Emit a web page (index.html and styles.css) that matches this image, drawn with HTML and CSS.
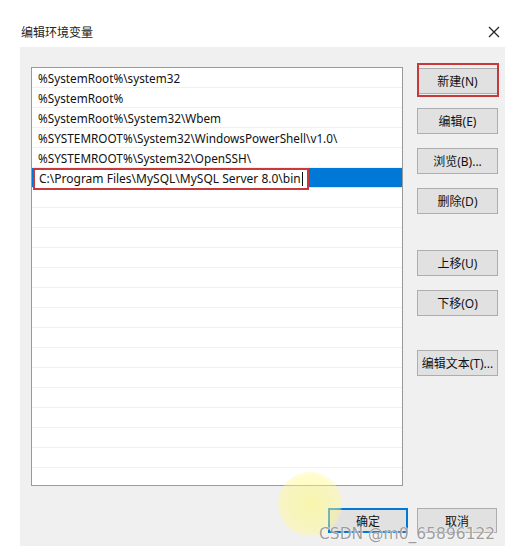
FILE: index.html
```html
<!DOCTYPE html>
<html lang="zh">
<head>
<meta charset="utf-8">
<title>编辑环境变量</title>
<link rel="stylesheet" href="styles.css">
</head>
<body>
<div class="dialog">
  <div class="titlebar">
    <span class="title">编辑环境变量</span>
    <svg class="close" width="12" height="12" viewBox="0 0 12 12"><path d="M1 1L11 11M11 1L1 11" stroke="#222" stroke-width="1.2" fill="none"/></svg>
  </div>
  <div class="panel">
    <div class="main">
      <div class="list">
        <div class="row">%SystemRoot%\system32</div>
        <div class="row">%SystemRoot%</div>
        <div class="row">%SystemRoot%\System32\Wbem</div>
        <div class="row">%SYSTEMROOT%\System32\WindowsPowerShell\v1.0\</div>
        <div class="row">%SYSTEMROOT%\System32\OpenSSH\</div>
        <div class="row selected"><span class="edit">C:\Program Files\MySQL\MySQL Server 8.0\bin<span class="caret"></span></span></div>
        <div class="empty"></div>
      </div>
      <div class="buttons">
        <div class="btn marked">新建(N)</div>
        <div class="btn">编辑(E)</div>
        <div class="btn">浏览(B)...</div>
        <div class="btn">删除(D)</div>
        <div class="btn gap1">上移(U)</div>
        <div class="btn">下移(O)</div>
        <div class="btn gap2">编辑文本(T)...</div>
      </div>
    </div>
    <div class="footer">
      <div class="btn default">确定</div>
      <div class="btn">取消</div>
    </div>
  </div>
  <div class="highlight"></div>
  <div class="watermark">CSDN @m0_65896122</div>
</div>
</body>
</html>
```
FILE: styles.css
```css
html, body {
  margin: 0;
  padding: 0;
  background: #ffffff;
}
body {
  width: 510px;
  height: 551px;
  overflow: hidden;
  font-family: "Noto Sans", "Noto Sans CJK SC", sans-serif;
  font-size: 12px;
  color: #111;
}
.dialog {
  position: relative;
  width: 510px;
  height: 551px;
}
.titlebar {
  height: 47px;
  display: flex;
  align-items: center;
  justify-content: space-between;
  padding: 0 10px 0 21px;
  box-sizing: border-box;
}
.title {
  font-family: "Noto Sans CJK SC", sans-serif;
  font-size: 12px;
  color: #222;
  margin-top: 16px;
}
.close {
  margin-top: 16px;
}
.panel {
  margin-left: 20px;
  width: 485px;
  height: 499px;
  background: #f0f0f0;
  box-sizing: border-box;
  padding: 20px 7px 0 11px;
}
.main {
  display: flex;
  gap: 14px;
}
.list {
  width: 372px;
  height: 419px;
  box-sizing: border-box;
  background: #fff;
  border: 1px solid #9a9a9a;
  display: flex;
  flex-direction: column;
  overflow: hidden;
}
.row {
  position: relative;
  height: 20px;
  flex: none;
  box-sizing: border-box;
  border-bottom: 1px solid #f0f0f0;
  padding-left: 6px;
  line-height: 20px;
  font-family: "Noto Sans", sans-serif;
  font-size: 11.75px;
  color: #111;
  white-space: nowrap;
}
.row.selected {
  background: #0078d7;
  border-bottom-color: #cfe6f8;
}
.edit {
  position: absolute;
  left: 1px;
  top: 0;
  width: 276px;
  height: 22px;
  box-sizing: border-box;
  background: #fff;
  border: 2px solid #c8393b;
  padding-left: 4px;
  line-height: 18px;
  font-size: 12px;
  color: #111;
}
.caret {
  display: inline-block;
  width: 1px;
  height: 14px;
  background: #111;
  vertical-align: -3px;
  margin-left: 1px;
}
.empty {
  flex: 1;
  background: repeating-linear-gradient(to bottom, #fff 0, #fff 19px, #f0f0f0 19px, #f0f0f0 20px);
}
.buttons {
  display: flex;
  flex-direction: column;
  gap: 14px;
  padding-top: 1px;
}
.btn {
  width: 81px;
  height: 26px;
  box-sizing: border-box;
  background: #e1e1e1;
  border: 1px solid #adadad;
  display: flex;
  align-items: center;
  justify-content: center;
  font-family: "Noto Sans", "Noto Sans CJK SC", sans-serif;
  font-size: 12px;
  color: #111;
}
.btn.marked {
  position: relative;
}
.btn.marked::after {
  content: "";
  position: absolute;
  left: -1px;
  right: -2px;
  top: -6px;
  bottom: -4px;
  border: 2px solid #c8393b;
}
.gap1 {
  margin-top: 22px;
}
.gap2 {
  margin-top: 20px;
}
.footer {
  display: flex;
  justify-content: flex-end;
  gap: 9px;
  margin-top: 22px;
  padding-right: 1px;
}
.footer .btn {
  width: 80px;
  height: 25px;
  align-items: flex-start;
  padding-top: 3px;
}
.btn.default {
  border: 2px solid #0078d7;
  padding-top: 2px;
}
.highlight {
  position: absolute;
  left: 278px;
  top: 472px;
  width: 64px;
  height: 64px;
  border-radius: 50%;
  background: radial-gradient(circle, rgba(255, 250, 120, 0.55) 0%, rgba(255, 250, 140, 0.45) 60%, rgba(255, 250, 160, 0) 100%);
}
.watermark {
  position: absolute;
  left: 319px;
  top: 525px;
  font-family: "DejaVu Sans", sans-serif;
  font-size: 15.5px;
  color: rgba(140, 140, 140, 0.85);
  text-shadow: 0 0 1px #fff, 1px 0 0 rgba(255,255,255,0.6);
  white-space: nowrap;
}
```
